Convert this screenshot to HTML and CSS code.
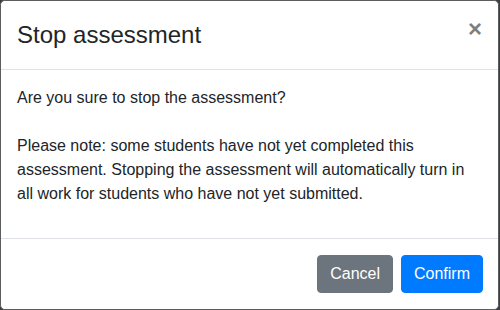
FILE: index.html
```html
<!DOCTYPE html>
<html><head>
    <title>Stop assessment</title>
    <meta charset="UTF-8">
    <meta name="viewport" content="width=device-width, initial-scale=1">
    <link rel="stylesheet" href="styles.css">
    </head>

    <body>
        <div class="modal-content">
            <div class="modal-header">
                <h4 class="modal-title">Stop assessment</h4>
                <button type="button" class="close">&times;</button>
            </div>
            <div class="modal-body">
                <p>Are you sure to stop the assessment?<br><br>Please note: some students have not yet completed this assessment. Stopping the assessment will automatically turn in all work for students who have not yet submitted.</p>
            </div>
            <div class="modal-footer">
                <button type="button" class="btn btn-secondary">Cancel</button>
                <button type="button" class="btn btn-primary">Confirm</button>
            </div>
        </div>
    </body>
</html>
```

FILE: styles.css
```css
html, body {
    margin: 0;
    padding: 0;
    height: 100%;
    background: #3b3d40;
}

body {
    font-family: "Liberation Sans", Arial, sans-serif;
    font-size: 16px;
    line-height: 1.5;
    color: #212529;
}

.modal-content {
    display: flex;
    flex-direction: column;
    width: 499px;
    background-color: #ffffff;
    border: 1px solid #5a5c5e;
    border-radius: 4.8px;
    box-sizing: border-box;
}

.modal-header {
    display: flex;
    align-items: flex-start;
    justify-content: space-between;
    padding: 16px;
    border-bottom: 1px solid #dee2e6;
}

.modal-title {
    margin: 0;
    font-size: 24px;
    font-weight: 500;
    line-height: 1.5;
}

.close {
    padding: 16px;
    margin: -16px -16px -16px auto;
    background-color: transparent;
    border: 0;
    font-family: inherit;
    font-size: 24px;
    font-weight: 700;
    line-height: 1;
    color: #000000;
    opacity: .5;
    text-shadow: 0 1px 0 #ffffff;
    cursor: pointer;
}

.modal-body {
    padding: 16px;
}

.modal-body p {
    margin: 0 0 16px 0;
}

.modal-footer {
    display: flex;
    align-items: center;
    justify-content: flex-end;
    gap: 8px;
    padding: 16px 15px 16px 16px;
    border-top: 1px solid #dee2e6;
}

.btn {
    display: inline-block;
    padding: 6px 12px;
    font-family: inherit;
    font-size: 16px;
    line-height: 1.5;
    color: #ffffff;
    border: 1px solid transparent;
    border-radius: 4px;
    cursor: pointer;
}

.btn-secondary {
    background-color: #6c757d;
    border-color: #6c757d;
}

.btn-primary {
    background-color: #007bff;
    border-color: #007bff;
}
```
